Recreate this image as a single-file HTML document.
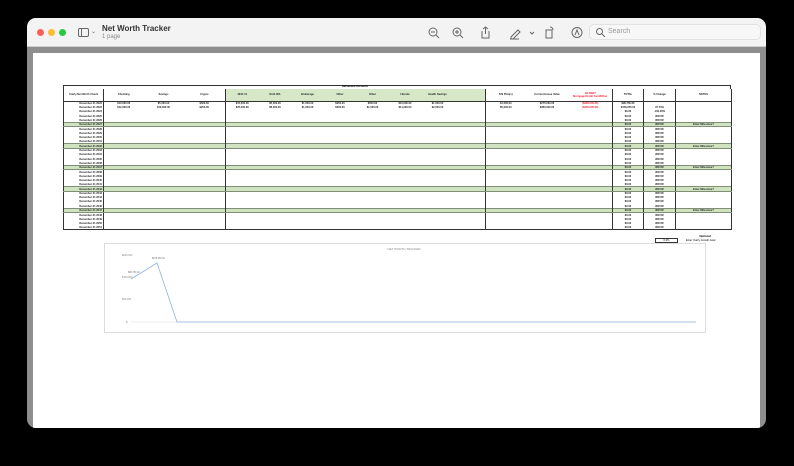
<!DOCTYPE html>
<html><head><meta charset="utf-8"><style>
*{margin:0;padding:0;box-sizing:border-box}
body{width:794px;height:466px;background:#000;position:relative;overflow:hidden;font-family:"Liberation Sans",sans-serif}
.win{position:absolute;left:27px;top:18px;width:739px;height:410px;background:#8e8e8e;border-radius:9px;overflow:hidden}
.tb{position:absolute;left:0;top:0;width:100%;height:29px;background:#f3f3f3;border-bottom:1px solid #d0d0d0}
.dot{position:absolute;top:11px;width:7px;height:7px;border-radius:50%}
.page{position:absolute;left:6px;top:35px;width:727px;height:375px;background:#fff}
table{position:absolute;left:36px;top:66px;border-collapse:collapse;table-layout:fixed;font-size:2.6px;line-height:3px;font-weight:bold}
td{height:4.3px;padding:0 1px;white-space:nowrap;overflow:hidden;color:#222;text-align:center}
.g td{background:#cfe3c0;border-top:1px solid #7f8f75;border-bottom:1px solid #7f8f75}
.b{border-right:1px solid #333}
.l{text-align:right;border-left:1px solid #333;border-right:1px solid #333}
.hd td{height:12px;border-bottom:1px solid #333}
.r{color:#e23}
</style></head><body>
<div class="win">
 <div class="tb">
  <div class="dot" style="left:10px;background:#fe5f57"></div>
  <div class="dot" style="left:21px;background:#febc2e"></div>
  <div class="dot" style="left:32px;background:#28c840"></div>
  <div style="position:absolute;left:51px;top:10px;width:11px;height:9px;border:1px solid #666;border-radius:2px"></div>
  <div style="position:absolute;left:54px;top:10px;width:1px;height:9px;background:#666"></div>
  <div style="position:absolute;left:64px;top:10px;font-size:6px;color:#666">⌄</div>
  <div style="position:absolute;left:75px;top:6px;font-size:8px;font-weight:bold;color:#333">Net Worth Tracker</div>
  <div style="position:absolute;left:75px;top:16px;font-size:6px;color:#888">1 page</div>
  <svg style="position:absolute;left:400px;top:8px" width="170" height="14" fill="none" stroke="#666" stroke-width="1">
   <circle cx="6" cy="6" r="4"/><path d="M9 9l3 3M4 6h4"/>
   <circle cx="30" cy="6" r="4"/><path d="M33 9l3 3M28 6h4M30 4v4"/>
   <path d="M55 5v7h7V5M58.5 1v7M56 3l2.5-2 2.5 2"/>
   <path d="M84 11l7-7 2 2-7 7h-2zM83 13h9"/><path d="M103 6l2 2 2-2"/>
   <rect x="119" y="4" width="6" height="8"/><path d="M123 1a3 3 0 013 3"/>
   <circle cx="150" cy="6.5" r="5"/><path d="M148 9l2-5 2 5"/>
  </svg>
  <div style="position:absolute;left:562px;top:6px;width:172px;height:16px;border:1px solid #e2e2e2;border-radius:5px;background:#f7f7f7"></div>
  <svg style="position:absolute;left:569px;top:10px" width="9" height="9" fill="none" stroke="#666"><circle cx="3.5" cy="3.5" r="3"/><path d="M6 6l3 3"/></svg>
  <div style="position:absolute;left:581px;top:10px;font-size:7px;color:#999">Search</div>
 </div>
 <div class="page"></div>
</div>
<div style="position:absolute;left:63px;top:85px;width:668px;height:4px;border:1px solid #333;border-bottom:none"></div>
<div style="position:absolute;left:225px;top:85px;width:260px;height:4px;font-size:2.6px;font-weight:bold;text-align:center;line-height:4px">Retirement Accounts</div>
<table style="top:89px;left:63px">
<colgroup><col style="width:40px"><col style="width:40px"><col style="width:40px"><col style="width:42px"><col style="width:33px"><col style="width:33px"><col style="width:32px"><col style="width:33px"><col style="width:32px"><col style="width:33px"><col style="width:32px"><col style="width:32px"><col style="width:40px"><col style="width:43px"><col style="width:44px"><col style="width:31px"><col style="width:32px"><col style="width:56px"></colgroup>
<tr class="hd"><td class="l" style="text-align:center">Yearly Net Worth Check</td><td>Checking</td><td>Savings</td><td class="b">Crypto</td><td style="background:#d6e8c8">401K #1</td><td style="background:#d6e8c8">Roth IRA</td><td style="background:#d6e8c8">Brokerage</td><td style="background:#d6e8c8">Other</td><td style="background:#d6e8c8">Other</td><td style="background:#d6e8c8">I Bonds</td><td style="background:#d6e8c8">Health Savings</td><td class="b" style="background:#d6e8c8"></td><td>529 Plan(s)</td><td>Current House Value</td><td class="b r">All DEBT<br>Mortgage/Credit Card/Other</td><td class="b">TOTAL</td><td class="b">% Change</td><td class="b">NOTES</td></tr>
<tr><td class="l">December 31 2022</td><td>$10,000.00</td><td>$5,000.00</td><td class="b">$500.00</td><td>$15,000.00</td><td>$5,000.00</td><td>$1,500.00</td><td>$250.00</td><td>$500.00</td><td>$10,000.00</td><td>$1,500.00</td><td class="b"></td><td>$1,500.00</td><td>$275,000.00</td><td class="b r">($228,000.00)</td><td class="b">$96,750.00</td><td class="b"></td><td class="b"></td></tr>
<tr><td class="l">December 31 2023</td><td>$12,000.00</td><td>$10,000.00</td><td class="b">$250.00</td><td>$25,000.00</td><td>$8,000.00</td><td>$1,500.00</td><td>$500.00</td><td>$1,500.00</td><td>$11,000.00</td><td>$2,500.00</td><td class="b"></td><td>$5,000.00</td><td>$280,000.00</td><td class="b r">($225,000.00)</td><td class="b">$158,250.00</td><td class="b">37.73%</td><td class="b"></td></tr>
<tr><td class="l">December 31 2024</td><td></td><td></td><td class="b"></td><td colspan="8" class="b"></td><td></td><td></td><td class="b"></td><td class="b">$0.00</td><td class="b">-100.00%</td><td class="b"></td></tr>
<tr><td class="l">December 31 2025</td><td></td><td></td><td class="b"></td><td colspan="8" class="b"></td><td></td><td></td><td class="b"></td><td class="b">$0.00</td><td class="b">#DIV/0!</td><td class="b"></td></tr>
<tr><td class="l">December 31 2026</td><td></td><td></td><td class="b"></td><td colspan="8" class="b"></td><td></td><td></td><td class="b"></td><td class="b">$0.00</td><td class="b">#DIV/0!</td><td class="b"></td></tr>
<tr class="g"><td class="l">December 31 2027</td><td></td><td></td><td class="b"></td><td colspan="8" class="b"></td><td></td><td></td><td class="b"></td><td class="b">$0.00</td><td class="b">#DIV/0!</td><td class="b">Enter Milestone?</td></tr>
<tr><td class="l">December 31 2028</td><td></td><td></td><td class="b"></td><td colspan="8" class="b"></td><td></td><td></td><td class="b"></td><td class="b">$0.00</td><td class="b">#DIV/0!</td><td class="b"></td></tr>
<tr><td class="l">December 31 2029</td><td></td><td></td><td class="b"></td><td colspan="8" class="b"></td><td></td><td></td><td class="b"></td><td class="b">$0.00</td><td class="b">#DIV/0!</td><td class="b"></td></tr>
<tr><td class="l">December 31 2030</td><td></td><td></td><td class="b"></td><td colspan="8" class="b"></td><td></td><td></td><td class="b"></td><td class="b">$0.00</td><td class="b">#DIV/0!</td><td class="b"></td></tr>
<tr><td class="l">December 31 2031</td><td></td><td></td><td class="b"></td><td colspan="8" class="b"></td><td></td><td></td><td class="b"></td><td class="b">$0.00</td><td class="b">#DIV/0!</td><td class="b"></td></tr>
<tr class="g"><td class="l">December 31 2032</td><td></td><td></td><td class="b"></td><td colspan="8" class="b"></td><td></td><td></td><td class="b"></td><td class="b">$0.00</td><td class="b">#DIV/0!</td><td class="b">Enter Milestone?</td></tr>
<tr><td class="l">December 31 2033</td><td></td><td></td><td class="b"></td><td colspan="8" class="b"></td><td></td><td></td><td class="b"></td><td class="b">$0.00</td><td class="b">#DIV/0!</td><td class="b"></td></tr>
<tr><td class="l">December 31 2034</td><td></td><td></td><td class="b"></td><td colspan="8" class="b"></td><td></td><td></td><td class="b"></td><td class="b">$0.00</td><td class="b">#DIV/0!</td><td class="b"></td></tr>
<tr><td class="l">December 31 2035</td><td></td><td></td><td class="b"></td><td colspan="8" class="b"></td><td></td><td></td><td class="b"></td><td class="b">$0.00</td><td class="b">#DIV/0!</td><td class="b"></td></tr>
<tr><td class="l">December 31 2036</td><td></td><td></td><td class="b"></td><td colspan="8" class="b"></td><td></td><td></td><td class="b"></td><td class="b">$0.00</td><td class="b">#DIV/0!</td><td class="b"></td></tr>
<tr class="g"><td class="l">December 31 2037</td><td></td><td></td><td class="b"></td><td colspan="8" class="b"></td><td></td><td></td><td class="b"></td><td class="b">$0.00</td><td class="b">#DIV/0!</td><td class="b">Enter Milestone?</td></tr>
<tr><td class="l">December 31 2038</td><td></td><td></td><td class="b"></td><td colspan="8" class="b"></td><td></td><td></td><td class="b"></td><td class="b">$0.00</td><td class="b">#DIV/0!</td><td class="b"></td></tr>
<tr><td class="l">December 31 2039</td><td></td><td></td><td class="b"></td><td colspan="8" class="b"></td><td></td><td></td><td class="b"></td><td class="b">$0.00</td><td class="b">#DIV/0!</td><td class="b"></td></tr>
<tr><td class="l">December 31 2040</td><td></td><td></td><td class="b"></td><td colspan="8" class="b"></td><td></td><td></td><td class="b"></td><td class="b">$0.00</td><td class="b">#DIV/0!</td><td class="b"></td></tr>
<tr><td class="l">December 31 2041</td><td></td><td></td><td class="b"></td><td colspan="8" class="b"></td><td></td><td></td><td class="b"></td><td class="b">$0.00</td><td class="b">#DIV/0!</td><td class="b"></td></tr>
<tr class="g"><td class="l">December 31 2042</td><td></td><td></td><td class="b"></td><td colspan="8" class="b"></td><td></td><td></td><td class="b"></td><td class="b">$0.00</td><td class="b">#DIV/0!</td><td class="b">Enter Milestone?</td></tr>
<tr><td class="l">December 31 2043</td><td></td><td></td><td class="b"></td><td colspan="8" class="b"></td><td></td><td></td><td class="b"></td><td class="b">$0.00</td><td class="b">#DIV/0!</td><td class="b"></td></tr>
<tr><td class="l">December 31 2044</td><td></td><td></td><td class="b"></td><td colspan="8" class="b"></td><td></td><td></td><td class="b"></td><td class="b">$0.00</td><td class="b">#DIV/0!</td><td class="b"></td></tr>
<tr><td class="l">December 31 2045</td><td></td><td></td><td class="b"></td><td colspan="8" class="b"></td><td></td><td></td><td class="b"></td><td class="b">$0.00</td><td class="b">#DIV/0!</td><td class="b"></td></tr>
<tr><td class="l">December 31 2046</td><td></td><td></td><td class="b"></td><td colspan="8" class="b"></td><td></td><td></td><td class="b"></td><td class="b">$0.00</td><td class="b">#DIV/0!</td><td class="b"></td></tr>
<tr class="g"><td class="l">December 31 2047</td><td></td><td></td><td class="b"></td><td colspan="8" class="b"></td><td></td><td></td><td class="b"></td><td class="b">$0.00</td><td class="b">#DIV/0!</td><td class="b">Enter Milestone?</td></tr>
<tr><td class="l">December 31 2048</td><td></td><td></td><td class="b"></td><td colspan="8" class="b"></td><td></td><td></td><td class="b"></td><td class="b">$0.00</td><td class="b">#DIV/0!</td><td class="b"></td></tr>
<tr><td class="l">December 31 2049</td><td></td><td></td><td class="b"></td><td colspan="8" class="b"></td><td></td><td></td><td class="b"></td><td class="b">$0.00</td><td class="b">#DIV/0!</td><td class="b"></td></tr>
<tr><td class="l">December 31 2050</td><td></td><td></td><td class="b"></td><td colspan="8" class="b"></td><td></td><td></td><td class="b"></td><td class="b">$0.00</td><td class="b">#DIV/0!</td><td class="b"></td></tr>
<tr style="border-bottom:1px solid #333"><td class="l">December 31 2051</td><td></td><td></td><td class="b"></td><td colspan="8" class="b"></td><td></td><td></td><td class="b"></td><td class="b">$0.00</td><td class="b">#DIV/0!</td><td class="b"></td></tr>
</table>
<div style="position:absolute;left:655px;top:238px;width:23px;height:5px;border:1px solid #333;font-size:2.6px;text-align:center;line-height:3px">0.0%</div>
<div style="position:absolute;left:690px;top:234px;width:30px;font-size:2.8px;font-weight:bold;text-align:center">Optional</div>
<div style="position:absolute;left:686px;top:239px;font-size:2.6px;white-space:nowrap">Enter Yearly Growth Goal</div>
<svg style="position:absolute;left:104px;top:243px" width="602" height="90">
<rect x="0.5" y="0.5" width="601" height="89" fill="#fff" stroke="#ddd"/>
<text x="300" y="7" font-size="3" text-anchor="middle" fill="#888" font-family="Liberation Sans">NET WORTH TRACKER</text>
<g font-size="2.5" fill="#888" font-family="Liberation Sans"><text x="18" y="13">$200,000</text><text x="18" y="35">$100,000</text><text x="18" y="57">$50,000</text><text x="22" y="80">$-</text></g>
<path d="M27 79H592" stroke="#ddd" stroke-width="0.5"/>
<polyline points="27,36 53,20 73,79 592,79" fill="none" stroke="#8fb4dc" stroke-width="0.8"/>
<g font-size="2.3" fill="#777" font-family="Liberation Sans">
<text x="24" y="30">$96,750.00</text><text x="48" y="16">$158,250.00</text>
</g>
</svg>
</body></html>
